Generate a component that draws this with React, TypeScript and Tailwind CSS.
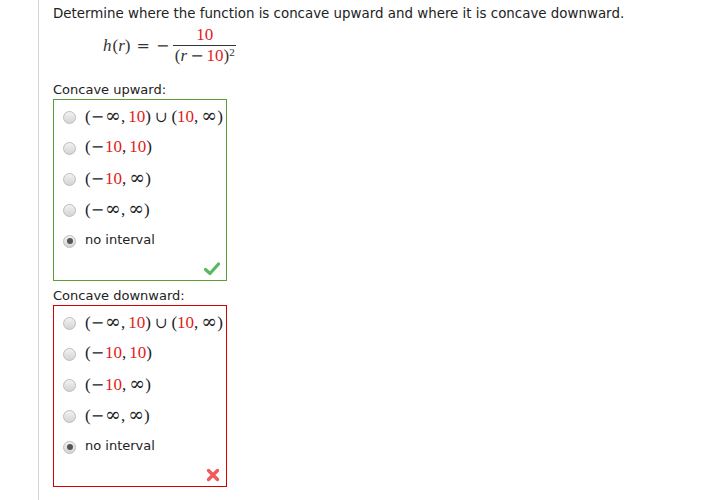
import React from 'react';

const RED = 'text-[#e31b1b]';

const Ten = () => <span className={RED}>10</span>;
const Minus = () => <span className="mr-[1px] font-['DejaVu_Serif'] text-[16px]">−</span>;
const Comma = () => <span className="mr-[3px]">,</span>;
const Inf = () => <span className="font-['DejaVu_Serif'] text-[19px] leading-none">∞</span>;

const options = [
  {
    id: 'a',
    math: (
      <>
        (<Minus />
        <Inf />
        <Comma />
        <Ten />)<span className="mx-[4px] font-['DejaVu_Serif'] text-[15px] font-light">∪</span>(<Ten />
        <Comma />
        <Inf />)
      </>
    ),
  },
  {
    id: 'b',
    math: (
      <>
        (<Minus />
        <Ten />
        <Comma />
        <Ten />)
      </>
    ),
  },
  {
    id: 'c',
    math: (
      <>
        (<Minus />
        <Ten />
        <Comma />
        <Inf />)
      </>
    ),
  },
  {
    id: 'd',
    math: (
      <>
        (<Minus />
        <Inf />
        <Comma />
        <Inf />)
      </>
    ),
  },
];

const Radio = ({ checked }: { checked?: boolean }) => (
  <span className="mt-[3px] flex h-[13px] w-[13px] shrink-0 items-center justify-center rounded-full border border-[#bcbcbc] bg-gradient-to-b from-[#f2f2f2] to-[#d4d4d4]">
    {checked && <span className="h-[6px] w-[6px] rounded-full bg-[#555]" />}
  </span>
);

const CheckMark = () => (
  <svg width="16" height="14" viewBox="0 0 16 14">
    <path d="M1.5 7.5 L6 11.5 L14.5 2" fill="none" stroke="#5cb85c" strokeWidth="3.2" strokeLinecap="round" strokeLinejoin="round" />
  </svg>
);

const CrossMark = () => (
  <svg width="14" height="14" viewBox="0 0 14 14">
    <path d="M2.5 2.5 L11.5 11.5 M11.5 2.5 L2.5 11.5" fill="none" stroke="#f05a5a" strokeWidth="3.4" strokeLinecap="round" />
  </svg>
);

const AnswerBox = ({ border, correct }: { border: string; correct: boolean }) => (
  <div className={`w-[174px] h-[182px] border ${border} flex flex-col`}>
    {options.map((o) => (
      <label key={o.id} className="flex h-[31px] items-center pl-[9px]">
        <Radio />
        <span className="ml-[9px] font-['Liberation_Serif'] text-[17px] leading-none text-[#222] whitespace-nowrap">{o.math}</span>
      </label>
    ))}
    <label className="flex h-[31px] items-center pl-[9px]">
      <Radio checked />
      <span className="ml-[9px] text-[13px] text-[#222]">no interval</span>
    </label>
    <div className="flex flex-1 items-center justify-end pr-[6px] pt-[2px]">
      {correct ? <CheckMark /> : <CrossMark />}
    </div>
  </div>
);

export default function App() {
  return (
    <div className="min-h-[500px] w-[717px] bg-white font-['DejaVu_Sans',Verdana,sans-serif]">
      <div className="ml-[38px] min-h-[500px] border-l border-[#d4d4d4] pl-[14px] pt-[5px] text-[#222]">
        <p className="text-[13.4px] leading-[18px] whitespace-nowrap">
          Determine where the function is concave upward and where it is concave downward.
        </p>

        {/* formula */}
        <div className="ml-[50px] mt-[2px] flex items-center font-['Liberation_Serif'] text-[17px] text-[#333]">
          <span className="italic">h</span>
          <span className="ml-[1px]">(</span>
          <span className="italic">r</span>
          <span>)</span>
          <span className="mx-[6px] font-['DejaVu_Serif'] text-[16px]">=</span>
          <span className="font-['DejaVu_Serif'] text-[16px]">−</span>
          <span className="ml-[4px] flex flex-col items-center">
            <span className={`${RED} leading-[20px]`}>10</span>
            <span className="h-px w-[63px] bg-[#333]" />
            <span className="leading-[20px]">
              (<span className="italic">r</span>
              <span className="mx-[3px] font-['DejaVu_Serif'] text-[16px]">−</span>
              <span className={RED}>10</span>)<sup className="text-[11px]">2</sup>
            </span>
          </span>
        </div>

        <div className="mt-[15px] text-[13px] leading-[18px]">Concave upward:</div>
        <AnswerBox border="border-[#5b9f35]" correct />

        <div className="mt-[6px] text-[13px] leading-[18px]">Concave downward:</div>
        <AnswerBox border="border-[#d40000]" correct={false} />
      </div>
    </div>
  );
}
